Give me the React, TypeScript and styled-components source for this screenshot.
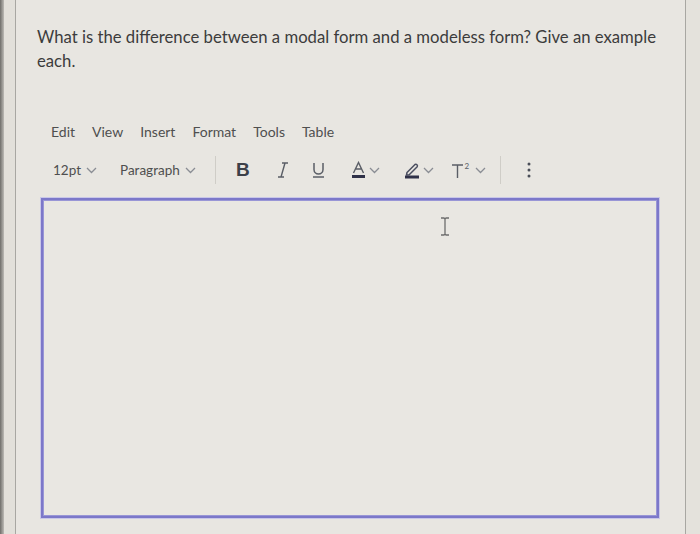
import React from "react";
import styled, { createGlobalStyle } from "styled-components";

const Global = createGlobalStyle`
  html, body { margin: 0; padding: 0; background: #e3e1db; }
  body { font-family: Lato, "Open Sans", "Liberation Sans", sans-serif; }
  * { box-sizing: border-box; }
`;

const Page = styled.div`
  width: 700px;
  height: 534px;
  display: flex;
  overflow: hidden;
  background: #e4e2dc;
`;

const EdgeShadow = styled.div`
  width: 4px;
  flex: none;
  background: linear-gradient(to right, #6f6e6a, #bdbbb6);
`;

const Gutter = styled.div`
  width: 11px;
  flex: none;
  background: #e2e0da;
`;

const Panel = styled.main`
  width: 671px;
  flex: none;
  position: relative;
  border-left: 1px solid #a8a7a2;
  border-right: 1px solid #a8a7a2;
  background: #e8e6e1;
  padding: 25px 0 0 21px;
`;

const Question = styled.p`
  margin: 0;
  width: 632px;
  font-size: 16.7px;
  line-height: 24px;
  color: #3c3c3c;
`;

const Editor = styled.section`
  margin: 48px 0 0 4px;
  width: 618px;
`;

const MenuBar = styled.nav`
  display: flex;
  height: 20px;
  align-items: center;
  padding-left: 10px;
  gap: 17px;
`;

const MenuItem = styled.span`
  font-size: 14px;
  color: #4f4f4f;
`;

const Toolbar = styled.div`
  display: flex;
  align-items: center;
  height: 30px;
  margin-top: 14px;
  padding-left: 12px;
`;

const Dropdown = styled.span<{ $w: number }>`
  display: flex;
  align-items: center;
  gap: 5px;
  width: ${(p) => p.$w}px;
  font-size: 13.5px;
  color: #4f4f4f;
`;

const Separator = styled.span<{ $ml: number }>`
  width: 1px;
  height: 28px;
  margin-left: ${(p) => p.$ml}px;
  background: #cfcdc7;
`;

const ToolButton = styled.span<{ $ml: number }>`
  display: flex;
  align-items: center;
  gap: 4px;
  margin-left: ${(p) => p.$ml}px;
  color: #3f4450;
`;

const BoldGlyph = styled.span`
  font-family: "Liberation Sans", Arial, sans-serif;
  font-weight: 700;
  font-size: 19px;
  color: #3c4048;
`;

const TextArea = styled.div`
  margin-top: 13px;
  height: 320px;
  border: 2px solid #7c78c9;
  box-shadow: inset 0 0 0 1px #9996d6, 0 0 0 1px #c9c7e8;
  background: #e9e7e2;
`;

const Cursor = styled.svg`
  position: absolute;
  left: 424px;
  top: 217px;
`;

const Chevron = () => (
  <svg width="11" height="7" viewBox="0 0 11 7">
    <path d="M1 1l4.5 4.5L10 1" fill="none" stroke="#8a8d94" strokeWidth="1.3" />
  </svg>
);

const ItalicIcon = () => (
  <svg width="12" height="18" viewBox="0 0 12 18">
    <path d="M5 2h6M1 16h6M8 2L4 16" fill="none" stroke="#5a5e66" strokeWidth="1.4" />
  </svg>
);

const UnderlineIcon = () => (
  <svg width="15" height="18" viewBox="0 0 15 18">
    <path d="M3 2v6.5a4.5 4.5 0 009 0V2" fill="none" stroke="#5a5e66" strokeWidth="1.5" />
    <path d="M2 16h11" stroke="#5a5e66" strokeWidth="1.5" />
  </svg>
);

const TextColorIcon = () => (
  <svg width="13" height="18" viewBox="0 0 13 18">
    <path d="M1.5 12L6.5 1.5 11.5 12M3.5 8h6" fill="none" stroke="#5a5e66" strokeWidth="1.4" />
    <rect x="0" y="14" width="13" height="3" fill="#2f3148" />
  </svg>
);

const HighlightIcon = () => (
  <svg width="14" height="18" viewBox="0 0 14 18">
    <path d="M2 11.5L10 3.5a1.6 1.6 0 012.2 2.2L4.2 13.7 1.5 14z" fill="none" stroke="#4a4e60" strokeWidth="1.5" strokeLinejoin="round" />
    <rect x="0" y="14.5" width="14" height="3" fill="#2f3148" />
  </svg>
);

const SuperscriptIcon = () => (
  <svg width="20" height="18" viewBox="0 0 20 18">
    <path d="M1 4h11M6.5 4v13" fill="none" stroke="#5a5e66" strokeWidth="1.4" />
    <text x="13.5" y="8" fontSize="8" fontFamily="Lato, sans-serif" fill="#5a5e66">2</text>
  </svg>
);

const MoreIcon = () => (
  <svg width="4" height="18" viewBox="0 0 4 18">
    <circle cx="2" cy="3" r="1.5" fill="#4a4e58" />
    <circle cx="2" cy="9" r="1.5" fill="#4a4e58" />
    <circle cx="2" cy="15" r="1.5" fill="#4a4e58" />
  </svg>
);

const menu = ["Edit", "View", "Insert", "Format", "Tools", "Table"];

export default function App() {
  return (
    <>
      <Global />
      <Page>
        <EdgeShadow />
        <Gutter />
        <Panel>
          <Question>
            What is the difference between a modal form and a modeless form? Give an example each.
          </Question>
          <Editor>
            <MenuBar>
              {menu.map((m) => (
                <MenuItem key={m}>{m}</MenuItem>
              ))}
            </MenuBar>
            <Toolbar>
              <Dropdown $w={67}>
                12pt <Chevron />
              </Dropdown>
              <Dropdown $w={90}>
                Paragraph <Chevron />
              </Dropdown>
              <Separator $ml={5} />
              <ToolButton $ml={20}>
                <BoldGlyph>B</BoldGlyph>
              </ToolButton>
              <ToolButton $ml={27}>
                <ItalicIcon />
              </ToolButton>
              <ToolButton $ml={22}>
                <UnderlineIcon />
              </ToolButton>
              <ToolButton $ml={26}>
                <TextColorIcon />
                <Chevron />
              </ToolButton>
              <ToolButton $ml={25}>
                <HighlightIcon />
                <Chevron />
              </ToolButton>
              <ToolButton $ml={17}>
                <SuperscriptIcon />
                <Chevron />
              </ToolButton>
              <Separator $ml={14} />
              <ToolButton $ml={26}>
                <MoreIcon />
              </ToolButton>
            </Toolbar>
            <TextArea />
          </Editor>
          <Cursor width="10" height="19" viewBox="0 0 10 19">
            <path d="M1 1h3l1 1 1-1h3M5 2v15M1 18h3l1-1 1 1h3" fill="none" stroke="#6d6d6d" strokeWidth="1.3" />
          </Cursor>
        </Panel>
      </Page>
    </>
  );
}
